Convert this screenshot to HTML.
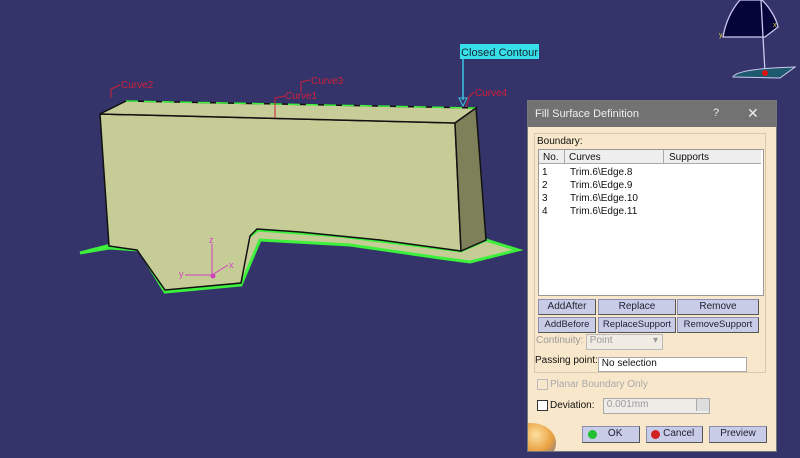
<!DOCTYPE html>
<html><head><style>
body{margin:0;width:800px;height:458px;background:#34346a;overflow:hidden;position:relative;font-family:"Liberation Sans",sans-serif}
.a{position:absolute}
.dlg{left:527px;top:100px;width:250px;height:352px;background:#f8e7cb;border:1px solid #777;box-sizing:border-box;overflow:hidden}
.tb{left:0;top:0;width:248px;height:26px;background:#727272;color:#eee;font-size:11px}
.btn{position:absolute;height:14px;background:#c8cce6;border:1px solid #8a8fb0;border-bottom-color:#555;border-right-color:#555;font-size:10px;text-align:center;line-height:14px;color:#223;white-space:nowrap;overflow:hidden}
.f{font-size:10px;color:#111}
</style></head><body>
<svg class="a" style="left:0;top:0" width="545" height="458">
<polygon points="80,253 130,240 250,236 258,230 340,236 461,251 486,240 518,250 470,262 440,258 350,245 260,240 241,285 165,292 139,250 109,248" fill="#c6cc96" stroke="#3cf03c" stroke-width="3"/>
<polygon points="100,114 455,123 461,251 380,240 300,232 257,229 250,236 241,283 165,290 137,250 109,246" fill="#c6cc96" stroke="#111" stroke-width="1.5"/>
<polygon points="100,114 126,101 476,108 455,123" fill="#c8cc98" stroke="#111" stroke-width="1.5"/>
<polyline points="126,101 476,108" fill="none" stroke="#3cf03c" stroke-width="1.5" stroke-dasharray="12,6"/>
<polygon points="455,123 476,108 486,240 461,251" fill="#7e805a" stroke="#111" stroke-width="1.5"/>
<g stroke="#d0203a" fill="none" stroke-width="1"><polyline points="111,98 111,89 120,85"/><polyline points="275,118 275,98 285,96"/><polyline points="301,92 301,82 310,80"/><polyline points="466,107 469,97 474,92"/></g>
<g fill="#d0203a" font-size="10"><text x="121" y="88">Curve2</text><text x="285" y="99">Curve1</text><text x="311" y="84">Curve3</text><text x="475" y="96">Curve4</text></g>
<line x1="463" y1="58" x2="463" y2="100" stroke="#3ac4e0" stroke-width="1.5"/>
<polygon points="459,98 467,98 463,106" fill="none" stroke="#3ac4e0"/>
<rect x="460" y="44" width="79" height="15" fill="#37e0e8"/>
<text x="461" y="56" font-size="11" fill="#123" textLength="77">Closed Contour</text>
<g stroke="#d040c0" fill="#d040c0" font-size="9"><line x1="212" y1="244" x2="212" y2="275"/><line x1="185" y1="275" x2="212" y2="275"/><line x1="212" y1="275" x2="228" y2="265"/><circle cx="213" cy="276" r="2"/><text x="209" y="243" stroke="none">z</text><text x="229" y="268" stroke="none">x</text><text x="179" y="277" stroke="none">y</text></g>
</svg>
<svg class="a" style="left:0;top:0" width="800" height="90">
<path d="M723,37 C726,20 733,8 740,0 L762,0 C770,8 776,18 778,27 L765,37 Z" fill="#05053a" stroke="#ccc8f0" stroke-width="1.3"/>
<polyline points="761,0 763,37 765,72" fill="none" stroke="#ccc8f0" stroke-width="1.3"/>
<path d="M733,77 C736,71 760,68 795,67 L780,78 Z" fill="#1e5a6e" stroke="#ccc8f0"/>
<circle cx="765" cy="73" r="3" fill="#e01010"/>
<text x="719" y="37" font-size="7" fill="#e0d040">y</text><text x="773" y="27" font-size="7" fill="#e0d040">x</text>
</svg>
<div class="a dlg">
<div class="a tb"><span class="a" style="left:7px;top:7px">Fill Surface Definition</span><span class="a" style="left:185px;top:6px">?</span><span class="a" style="left:219px;top:4px;font-size:14px">✕</span></div>
<div class="a" style="left:6px;top:32px;width:230px;height:238px;border:1px solid #d8c8b0"></div>
<div class="a f" style="left:9px;top:35px">Boundary:</div>
<div class="a" style="left:10px;top:48px;width:224px;height:145px;background:#fff;border:1px solid #999"></div>
<div class="a f" style="left:11px;top:49px;width:222px;height:13px;background:#eee;border-bottom:1px solid #aaa"></div>
<div class="a f" style="left:15px;top:51px">No.</div><div class="a f" style="left:41px;top:51px">Curves</div><div class="a f" style="left:141px;top:51px">Supports</div>
<div class="a" style="left:36px;top:49px;width:1px;height:13px;background:#aaa"></div><div class="a" style="left:135px;top:49px;width:1px;height:13px;background:#aaa"></div>
<div class="a f" style="left:14px;top:65px;line-height:13px">1<br>2<br>3<br>4</div>
<div class="a f" style="left:42px;top:65px;line-height:13px">Trim.6\Edge.8<br>Trim.6\Edge.9<br>Trim.6\Edge.10<br>Trim.6\Edge.11</div>
<div class="btn" style="left:10px;top:198px;width:56px">AddAfter</div>
<div class="btn" style="left:70px;top:198px;width:76px">Replace</div>
<div class="btn" style="left:149px;top:198px;width:80px">Remove</div>
<div class="btn" style="left:10px;top:216px;width:56px;font-size:9.5px">AddBefore</div>
<div class="btn" style="left:70px;top:216px;width:76px;font-size:9.5px">ReplaceSupport</div>
<div class="btn" style="left:149px;top:216px;width:80px;font-size:9.5px">RemoveSupport</div>
<div class="a f" style="left:8px;top:234px;color:#999">Continuity:</div>
<div class="a f" style="left:58px;top:233px;width:75px;height:14px;border:1px solid #bbb;background:#f0ece4;color:#999">&nbsp;Point<span style="float:right;margin-right:4px">▾</span></div>
<div class="a f" style="left:7px;top:254px">Passing point:</div>
<div class="a f" style="left:70px;top:256px;width:147px;height:13px;background:#fff;border:1px solid #aaa">&nbsp;No selection</div>
<div class="a" style="left:9px;top:278px;width:9px;height:9px;border:1px solid #bbb"></div>
<div class="a f" style="left:22px;top:278px;color:#aaa">Planar Boundary Only</div>
<div class="a" style="left:9px;top:299px;width:9px;height:9px;border:1px solid #333;background:#fff"></div>
<div class="a f" style="left:22px;top:299px">Deviation:</div>
<div class="a f" style="left:75px;top:297px;width:105px;height:14px;border:1px solid #aaa;background:#efece8;color:#999">&nbsp;0.001mm</div>
<div class="a" style="left:168px;top:298px;width:12px;height:12px;background:#ddd;border-left:1px solid #aaa"></div>
<div class="a" style="left:-22px;top:322px;width:50px;height:40px;border-radius:50%;background:radial-gradient(circle at 60% 30%,#ffe0a0,#e8a040 40%,#6070a0 75%)"></div>
<div class="btn" style="left:54px;top:325px;width:56px;height:15px">&nbsp;&nbsp;&nbsp;OK<span class="a" style="left:5px;top:3px;width:9px;height:9px;border-radius:50%;background:#20c030"></span></div>
<div class="btn" style="left:118px;top:325px;width:55px;height:15px">&nbsp;&nbsp;&nbsp;Cancel<span class="a" style="left:4px;top:3px;width:9px;height:9px;border-radius:50%;background:#d02020"></span></div>
<div class="btn" style="left:181px;top:325px;width:56px;height:15px">Preview</div>
</div>
</body></html>
